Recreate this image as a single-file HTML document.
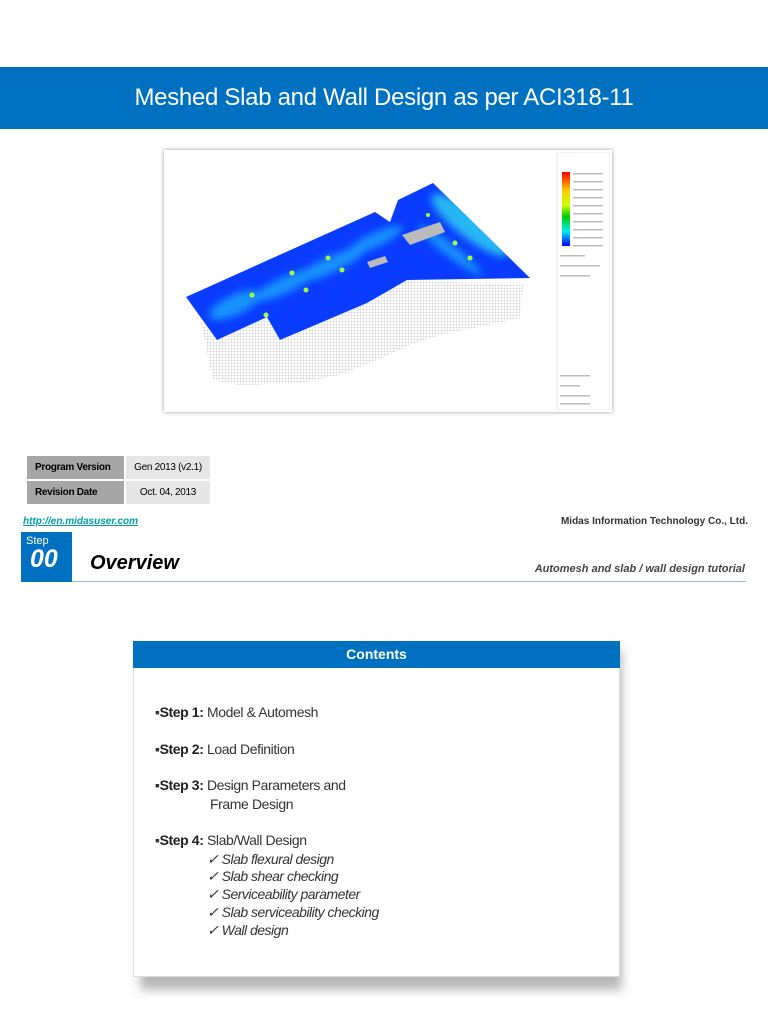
<!DOCTYPE html>
<html><head><meta charset="utf-8"><style>
*{margin:0;padding:0;box-sizing:border-box}
body{width:768px;height:1024px;background:#fff;position:relative;font-family:"Liberation Sans",Arial,sans-serif;overflow:hidden}
.abs{position:absolute}
.banner{left:0;top:67px;width:768px;height:62px;background:#0070c0;color:#fff;font-size:24px;text-align:center;line-height:62px;letter-spacing:-0.3px}
table{border-collapse:separate;border-spacing:0 2px}
td{font-size:10px;height:23px;padding:0 8px;letter-spacing:-0.3px}
.k{background:#a6a6a6;font-weight:bold;width:97px}
.v{background:#e6e6e6;width:86px;text-align:center;border-left:2px solid #fff}
.item{font-size:14px;color:#333;left:155px;letter-spacing:-0.4px}
.item b{color:#222}
.sub{font-size:14px;font-style:italic;color:#333;left:207px;letter-spacing:-0.5px}
</style></head><body>
<div class="abs banner">Meshed Slab and Wall Design as per ACI318-11</div>

<div class="abs" style="left:164px;top:150px;width:448px;height:262px;box-shadow:0 0 4px #999;background:#fff"></div>
<svg class="abs" style="left:166px;top:152px" width="444" height="258" viewBox="166 152 444 258">
<defs><pattern id="g" width="3" height="3" patternUnits="userSpaceOnUse"><path d="M0 0H3M0 0V3" stroke="#999" stroke-width="0.5"/></pattern>
<filter id="b"><feGaussianBlur stdDeviation="4"/></filter>
<clipPath id="c"><polygon points="186,297 375,212 390,222 398,200 433,183 530,278 407,280 367,303 280,340 267,317 217,340"/></clipPath></defs>
<polygon points="200,320 213,380 240,385 300,383 340,375 372,362 410,345 440,335 520,318 523,285 407,280 367,303 280,340 267,317 217,340" fill="url(#g)" opacity="0.85"/>
<polygon points="186,297 375,212 390,222 398,200 433,183 530,278 407,280 367,303 280,340 267,317 217,340" fill="#0a3cff"/>
<g clip-path="url(#c)" filter="url(#b)" fill="#1ab0ff" opacity="0.75">
<ellipse cx="235" cy="305" rx="28" ry="10" transform="rotate(-25 235 305)"/>
<ellipse cx="285" cy="285" rx="35" ry="8" transform="rotate(-25 285 285)"/>
<ellipse cx="330" cy="265" rx="40" ry="8" transform="rotate(-25 330 265)"/>
<ellipse cx="375" cy="240" rx="30" ry="7" transform="rotate(-25 375 240)"/>
<ellipse cx="470" cy="225" rx="48" ry="13" transform="rotate(38 470 225)" fill="#30e0f0"/>
<ellipse cx="450" cy="250" rx="40" ry="6" transform="rotate(38 450 250)"/>
</g>
<g fill="#a0ff40">
<circle cx="252" cy="295" r="2.5"/><circle cx="266" cy="315" r="2.5"/><circle cx="292" cy="273" r="2.5"/><circle cx="306" cy="290" r="2.5"/><circle cx="328" cy="258" r="2.5"/><circle cx="342" cy="270" r="2.5"/><circle cx="470" cy="258" r="2.5"/><circle cx="455" cy="243" r="2.5"/><circle cx="428" cy="215" r="2"/>
</g>
<polygon points="402,235 440,222 445,232 410,245" fill="#bbb"/>
<polygon points="367,262 385,256 388,262 370,268" fill="#bbb"/>
<rect x="557" y="152" width="53" height="258" fill="#fff" stroke="#ccc" stroke-width="0.5"/>
<defs><linearGradient id="lg" x1="0" y1="0" x2="0" y2="1"><stop offset="0" stop-color="#f00"/><stop offset=".25" stop-color="#fc0"/><stop offset=".45" stop-color="#cf0"/><stop offset=".6" stop-color="#0c0"/><stop offset=".8" stop-color="#0ee"/><stop offset="1" stop-color="#00f"/></linearGradient></defs>
<rect x="562" y="172" width="8" height="74" fill="url(#lg)"/>
<g fill="#bbb"><rect x="573" y="173" width="30" height="1.5"/><rect x="573" y="181" width="30" height="1.5"/><rect x="573" y="189" width="30" height="1.5"/><rect x="573" y="197" width="30" height="1.5"/><rect x="573" y="205" width="30" height="1.5"/><rect x="573" y="213" width="30" height="1.5"/><rect x="573" y="221" width="30" height="1.5"/><rect x="573" y="229" width="30" height="1.5"/><rect x="573" y="237" width="30" height="1.5"/><rect x="573" y="245" width="30" height="1.5"/><rect x="560" y="255" width="25" height="1.5"/><rect x="560" y="265" width="40" height="1.5"/><rect x="560" y="275" width="30" height="1.5"/><rect x="560" y="375" width="30" height="1.5"/><rect x="560" y="385" width="20" height="1.5"/><rect x="560" y="395" width="30" height="1.5"/><rect x="560" y="403" width="30" height="1.5"/></g>
</svg>

<table class="abs" style="left:27px;top:454px">
<tr><td class="k">Program Version</td><td class="v">Gen 2013 (v2.1)</td></tr>
<tr><td class="k">Revision Date</td><td class="v">Oct. 04, 2013</td></tr>
</table>

<div class="abs" style="left:23px;top:516px;font-size:10px;font-weight:bold;font-style:italic;color:#00a0a0;text-decoration:underline">http://en.midasuser.com</div>
<div class="abs" style="right:20px;top:516px;font-size:10px;font-weight:bold;color:#333">Midas Information Technology Co., Ltd.</div>
<div class="abs" style="left:21px;top:532px;width:51px;height:50px;background:#0070c0;color:#fff">
<div style="font-size:11px;padding:3px 0 0 5px">Step</div>
<div style="font-size:25px;font-weight:bold;font-style:italic;padding-left:9px;line-height:24px">00</div></div>
<div class="abs" style="left:90px;top:552px;font-size:20px;font-weight:bold;font-style:italic">Overview</div>
<div class="abs" style="right:23px;top:563px;font-size:11px;font-weight:bold;font-style:italic;color:#444">Automesh and slab / wall design tutorial</div>
<div class="abs" style="left:72px;top:581px;width:674px;height:1px;background:#9cb8d8"></div>

<div class="abs" style="left:140px;top:650px;width:482px;height:340px;background:#888;filter:blur(5px);opacity:.6"></div>
<div class="abs" style="left:133px;top:641px;width:487px;height:336px;background:#fff;border:1px solid #ddd"></div>
<div class="abs" style="left:133px;top:641px;width:487px;height:27px;background:#0070c0;color:#fff;font-size:14px;font-weight:bold;text-align:center;line-height:26px">Contents</div>
<div class="abs item" style="top:704px">▪<b>Step 1:</b> Model &amp; Automesh</div>
<div class="abs item" style="top:741px">▪<b>Step 2:</b> Load Definition</div>
<div class="abs item" style="top:777px">▪<b>Step 3:</b> Design Parameters and</div>
<div class="abs item" style="top:796px;left:210px">Frame Design</div>
<div class="abs item" style="top:832px">▪<b>Step 4:</b> Slab/Wall Design</div>
<div class="abs sub" style="top:851px">✓ Slab flexural design</div>
<div class="abs sub" style="top:868px">✓ Slab shear checking</div>
<div class="abs sub" style="top:886px">✓ Serviceability parameter</div>
<div class="abs sub" style="top:904px">✓ Slab serviceability checking</div>
<div class="abs sub" style="top:922px">✓ Wall design</div>
</body></html>
